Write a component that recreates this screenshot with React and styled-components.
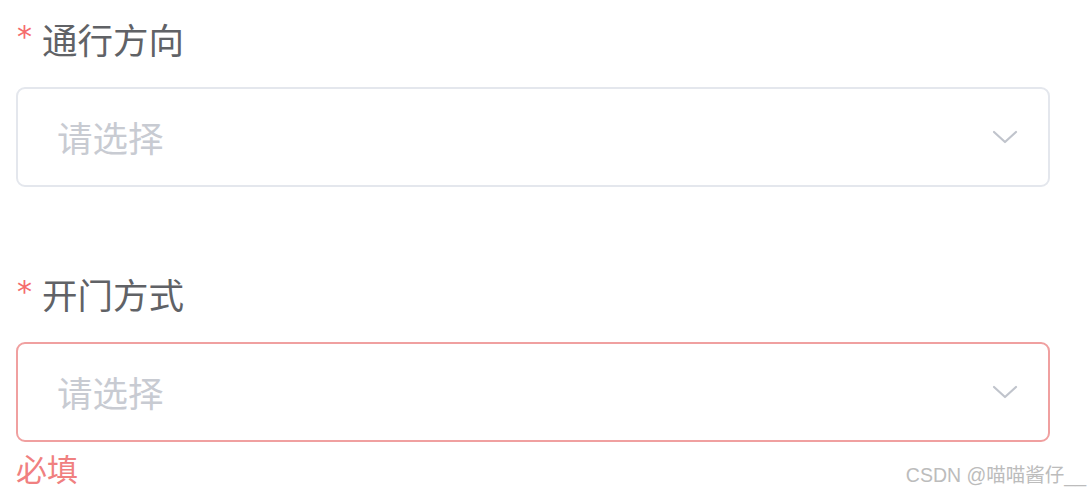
import React from "react";
import styled, { createGlobalStyle } from "styled-components";

const GlobalStyle = createGlobalStyle`
  html, body {
    margin: 0;
    padding: 0;
    background: #ffffff;
  }
  body {
    font-family: "Noto Sans CJK SC", "Noto Sans", sans-serif;
  }
`;

const Page = styled.div`
  position: relative;
  width: 1092px;
  height: 494px;
  overflow: hidden;
  box-sizing: border-box;
  padding: 14px 42px 0 16px;
`;

const FormItem = styled.div`
  display: flex;
  flex-direction: column;
  margin-bottom: ${props => props.gap || 0}px;
`;

const Label = styled.label`
  display: flex;
  align-items: center;
  height: 48px;
  font-size: 35.5px;
  color: #606266;
  margin-bottom: 25px;

  & .star {
    color: #f56c6c;
    font-family: "DejaVu Sans", sans-serif;
    font-size: 30px;
    width: 25px;
    padding-left: 1px;
    margin-top: -4px;
  }
`;

const SelectBox = styled.div`
  display: flex;
  align-items: center;
  justify-content: space-between;
  box-sizing: border-box;
  height: 100px;
  padding: 0 30px 0 39px;
  border: 2px solid ${props => (props.error ? "#f0a0a0" : "#e4e7ed")};
  border-radius: 9px;
  background: #fff;
`;

const Placeholder = styled.span`
  font-size: 35.5px;
  color: #c8cbd2;
  margin-top: -2px;
`;

const ErrorText = styled.div`
  color: #f08080;
  font-size: 31px;
  line-height: 36px;
  margin-top: 8px;
`;

const Watermark = styled.div`
  position: absolute;
  right: 6px;
  bottom: 6px;
  font-family: "Liberation Sans", "Noto Sans CJK SC", sans-serif;
  font-size: 19.5px;
  color: #bcbcbc;
`;

const Chevron = () => (
  <svg width="26" height="16" viewBox="0 0 26 16" fill="none">
    <path
      d="M2 3 L13 13 L24 3"
      stroke="#c0c4cc"
      strokeWidth="2.2"
      strokeLinecap="round"
      strokeLinejoin="round"
    />
  </svg>
);

const fields = [
  { label: "通行方向", error: false, gap: 82 },
  { label: "开门方式", error: true, gap: 0 }
];

const App = () => (
  <>
    <GlobalStyle />
    <Page>
      {fields.map(field => (
        <FormItem key={field.label} gap={field.gap}>
          <Label>
            <span className="star">*</span>
            {field.label}
          </Label>
          <SelectBox error={field.error}>
            <Placeholder>请选择</Placeholder>
            <Chevron />
          </SelectBox>
          {field.error && <ErrorText>必填</ErrorText>}
        </FormItem>
      ))}
      <Watermark>CSDN @喵喵酱仔__</Watermark>
    </Page>
  </>
);

export default App;
